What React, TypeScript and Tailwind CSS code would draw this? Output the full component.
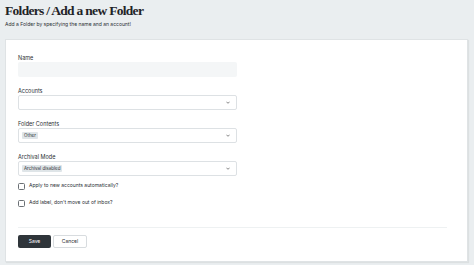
import React from 'react';

const Chevron: React.FC = () => (
  <svg width="4" height="3" viewBox="0 0 10 6" className="text-[#666]">
    <path d="M1 1l4 4 4-4" fill="none" stroke="currentColor" strokeWidth="2" />
  </svg>
);

const Field: React.FC<{ label: string; children: React.ReactNode }> = ({ label, children }) => (
  <div className="flex flex-col">
    <label className="h-[8px] leading-[8px] text-[5.5px] text-[#2b3035]">{label}</label>
    {children}
  </div>
);

const Select: React.FC<{ value?: string }> = ({ value }) => (
  <div className="h-[15px] w-[219px] border border-[#dde1e4] rounded-[2px] bg-white flex items-center justify-between pl-[3px] pr-[6px]">
    {value ? (
      <span className="bg-[#dfe5e8] text-[#2b3035] text-[4.5px] leading-[7px] px-[2px] rounded-[1px]">{value}</span>
    ) : (
      <span />
    )}
    <Chevron />
  </div>
);

const Check: React.FC<{ label: string }> = ({ label }) => (
  <div className="flex items-center gap-[4px] h-[8px]">
    <div className="w-[7px] h-[7px] border border-[#6b7075] rounded-[1.5px] bg-white" />
    <span className="text-[5px] text-[#2b3035]">{label}</span>
  </div>
);

const App: React.FC = () => {
  return (
    <div className="w-[474px] h-[265px] bg-[#eaeef0] px-[5px] pt-[2px] overflow-hidden" style={{ fontFamily: 'Inter, "Noto Sans", sans-serif' }}>
      <h1 className="text-[13.5px] leading-[18px] font-bold text-[#1f2428] tracking-[-0.7px]" style={{ fontFamily: '"Liberation Serif", serif' }}>
        Folders / Add a new Folder
      </h1>
      <p className="text-[5px] leading-[8px] text-[#2b3035]">Add a Folder by specifying the name and an account!</p>

      <div className="mt-[11px] w-[463px] h-[223px] bg-white border border-[#dfe3e5] shadow-[1px_1px_1px_rgba(0,0,0,0.06)] pl-[12px] pr-[20px] pt-[14px]">
        <div className="flex flex-col gap-[10px]">
          <Field label="Name">
            <div className="h-[15px] w-[219px] bg-[#f4f6f7] rounded-[2px]" />
          </Field>
          <Field label="Accounts">
            <Select />
          </Field>
          <Field label="Folder Contents">
            <Select value="Other" />
          </Field>
          <Field label="Archival Mode">
            <Select value="Archival disabled" />
          </Field>
        </div>

        <div className="mt-[6px] flex flex-col gap-[9px]">
          <Check label="Apply to new accounts automatically?" />
          <Check label="Add label, don't move out of inbox?" />
        </div>

        <div className="mt-[20px] border-t border-[#eef1f2] pt-[7px] flex gap-[2px]">
          <button className="w-[33px] h-[13px] bg-[#2f353a] text-white text-[5px] rounded-[2px]">Save</button>
          <button className="w-[34px] h-[13px] bg-white border border-[#d8dcdf] text-[#2b3035] text-[5px] rounded-[2px]">Cancel</button>
        </div>
      </div>
    </div>
  );
};

export default App;
